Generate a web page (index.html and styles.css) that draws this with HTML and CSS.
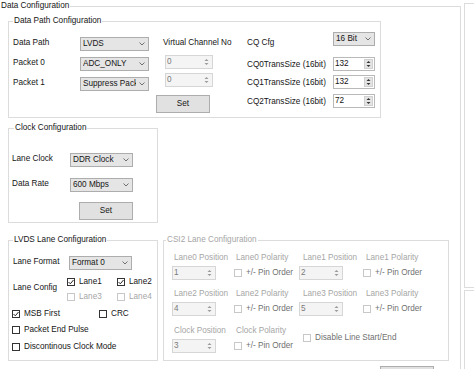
FILE: index.html
```html
<!DOCTYPE html>
<html>
<head>
<meta charset="utf-8">
<title>Data Configuration</title>
<link rel="stylesheet" href="styles.css">
</head>
<body>
<div class="page">
  <section class="group outer">
    <div class="title">Data Configuration</div>

    <section class="group datapath">
      <div class="title">Data Path Configuration</div>
      <div class="dp-body">
        <div class="dp-left">
          <div class="row"><span class="lbl w67">Data Path</span><div class="combo w69"><span class="val">LVDS</span><span class="arrow"><svg width="6" height="4" viewBox="0 0 6 4"><path d="M0.5 0.5 L3 3 L5.5 0.5" fill="none" stroke="#707070"/></svg></span></div></div>
          <div class="row"><span class="lbl w67">Packet 0</span><div class="combo w69"><span class="val">ADC_ONLY</span><span class="arrow"><svg width="6" height="4" viewBox="0 0 6 4"><path d="M0.5 0.5 L3 3 L5.5 0.5" fill="none" stroke="#707070"/></svg></span></div></div>
          <div class="row"><span class="lbl w67">Packet 1</span><div class="combo w69"><span class="val">Suppress Packet</span><span class="arrow"><svg width="6" height="4" viewBox="0 0 6 4"><path d="M0.5 0.5 L3 3 L5.5 0.5" fill="none" stroke="#707070"/></svg></span></div></div>
        </div>
        <div class="dp-vc">
          <span class="lbl">Virtual Channel No</span>
          <div class="spin off s1"><span class="val">0</span><span class="arrows"><svg width="5" height="8" viewBox="0 0 5 8"><path d="M0.5 3 L2.5 1 L4.5 3 Z M0.5 5 L4.5 5 L2.5 7 Z" fill="#9a9a9a"/></svg></span></div>
          <div class="spin off s2"><span class="val">0</span><span class="arrows"><svg width="5" height="8" viewBox="0 0 5 8"><path d="M0.5 3 L2.5 1 L4.5 3 Z M0.5 5 L4.5 5 L2.5 7 Z" fill="#9a9a9a"/></svg></span></div>
          <button class="btn">Set</button>
        </div>
        <div class="dp-cq">
          <div class="row r1"><span class="lbl w86">CQ Cfg</span><div class="combo w42"><span class="val">16 Bit</span><span class="arrow"><svg width="6" height="4" viewBox="0 0 6 4"><path d="M0.5 0.5 L3 3 L5.5 0.5" fill="none" stroke="#707070"/></svg></span></div></div>
          <div class="row r2"><span class="lbl w86">CQ0TransSize (16bit)</span><div class="spin w42"><span class="val">132</span><span class="arrows"><svg width="5" height="8" viewBox="0 0 5 8"><path d="M0.5 3 L2.5 1 L4.5 3 Z M0.5 5 L4.5 5 L2.5 7 Z" fill="#333"/></svg></span></div></div>
          <div class="row r3"><span class="lbl w86">CQ1TransSize (16bit)</span><div class="spin w42"><span class="val">132</span><span class="arrows"><svg width="5" height="8" viewBox="0 0 5 8"><path d="M0.5 3 L2.5 1 L4.5 3 Z M0.5 5 L4.5 5 L2.5 7 Z" fill="#333"/></svg></span></div></div>
          <div class="row r4"><span class="lbl w86">CQ2TransSize (16bit)</span><div class="spin w42"><span class="val">72</span><span class="arrows"><svg width="5" height="8" viewBox="0 0 5 8"><path d="M0.5 3 L2.5 1 L4.5 3 Z M0.5 5 L4.5 5 L2.5 7 Z" fill="#333"/></svg></span></div></div>
        </div>
      </div>
    </section>

    <section class="group clock">
      <div class="title">Clock Configuration</div>
      <div class="clock-body">
        <div class="row"><span class="lbl w58">Lane Clock</span><div class="combo w63"><span class="val">DDR Clock</span><span class="arrow"><svg width="6" height="4" viewBox="0 0 6 4"><path d="M0.5 0.5 L3 3 L5.5 0.5" fill="none" stroke="#707070"/></svg></span></div></div>
        <div class="row r2"><span class="lbl w58">Data Rate</span><div class="combo w63"><span class="val">600 Mbps</span><span class="arrow"><svg width="6" height="4" viewBox="0 0 6 4"><path d="M0.5 0.5 L3 3 L5.5 0.5" fill="none" stroke="#707070"/></svg></span></div></div>
        <button class="btn clock-set">Set</button>
      </div>
    </section>

    <div class="bottom">
      <section class="group lvds">
        <div class="title">LVDS Lane Configuration</div>
        <div class="lvds-body">
          <div class="row"><span class="lbl w56">Lane Format</span><div class="combo w63"><span class="val">Format 0</span><span class="arrow"><svg width="6" height="4" viewBox="0 0 6 4"><path d="M0.5 0.5 L3 3 L5.5 0.5" fill="none" stroke="#707070"/></svg></span></div></div>
          <div class="lanes">
            <span class="lbl lanes-lbl">Lane Config</span>
            <div class="lane-grid">
              <label class="chk"><span class="box"><svg width="6" height="6" viewBox="0 0 6 6"><path d="M0.5 3 L2.3 4.8 L5.5 1" fill="none" stroke="#222"/></svg></span><span class="txt">Lane1</span></label>
              <label class="chk"><span class="box"><svg width="6" height="6" viewBox="0 0 6 6"><path d="M0.5 3 L2.3 4.8 L5.5 1" fill="none" stroke="#222"/></svg></span><span class="txt">Lane2</span></label>
              <label class="chk dis"><span class="box"></span><span class="txt">Lane3</span></label>
              <label class="chk dis"><span class="box"></span><span class="txt">Lane4</span></label>
            </div>
          </div>
          <div class="row msb">
            <label class="chk w87"><span class="box"><svg width="6" height="6" viewBox="0 0 6 6"><path d="M0.5 3 L2.3 4.8 L5.5 1" fill="none" stroke="#222"/></svg></span><span class="txt">MSB First</span></label>
            <label class="chk"><span class="box"></span><span class="txt">CRC</span></label>
          </div>
          <label class="chk pep"><span class="box"></span><span class="txt">Packet End Pulse</span></label>
          <label class="chk dcm"><span class="box"></span><span class="txt">Discontinous Clock Mode</span></label>
        </div>
      </section>

      <section class="group csi">
        <div class="title">CSI2 Lane Configuration</div>
        <div class="csi-body">
          <div class="csi-row">
            <div class="pos"><span class="lbl">Lane0 Position</span><div class="spin off"><span class="val">1</span><span class="arrows"><svg width="5" height="8" viewBox="0 0 5 8"><path d="M0.5 3 L2.5 1 L4.5 3 Z M0.5 5 L4.5 5 L2.5 7 Z" fill="#9a9a9a"/></svg></span></div></div>
            <div class="pol"><span class="lbl">Lane0 Polarity</span><label class="chk dis2"><span class="box"></span><span class="txt">+/- Pin Order</span></label></div>
            <div class="pos p3"><span class="lbl">Lane1 Position</span><div class="spin off"><span class="val">2</span><span class="arrows"><svg width="5" height="8" viewBox="0 0 5 8"><path d="M0.5 3 L2.5 1 L4.5 3 Z M0.5 5 L4.5 5 L2.5 7 Z" fill="#9a9a9a"/></svg></span></div></div>
            <div class="pol p4"><span class="lbl">Lane1 Polarity</span><label class="chk dis2"><span class="box"></span><span class="txt">+/- Pin Order</span></label></div>
          </div>
          <div class="csi-row r2">
            <div class="pos"><span class="lbl">Lane2 Position</span><div class="spin off"><span class="val">4</span><span class="arrows"><svg width="5" height="8" viewBox="0 0 5 8"><path d="M0.5 3 L2.5 1 L4.5 3 Z M0.5 5 L4.5 5 L2.5 7 Z" fill="#9a9a9a"/></svg></span></div></div>
            <div class="pol"><span class="lbl">Lane2 Polarity</span><label class="chk dis2"><span class="box"></span><span class="txt">+/- Pin Order</span></label></div>
            <div class="pos p3"><span class="lbl">Lane3 Position</span><div class="spin off"><span class="val">5</span><span class="arrows"><svg width="5" height="8" viewBox="0 0 5 8"><path d="M0.5 3 L2.5 1 L4.5 3 Z M0.5 5 L4.5 5 L2.5 7 Z" fill="#9a9a9a"/></svg></span></div></div>
            <div class="pol p4"><span class="lbl">Lane3 Polarity</span><label class="chk dis2"><span class="box"></span><span class="txt">+/- Pin Order</span></label></div>
          </div>
          <div class="csi-row r3">
            <div class="pos"><span class="lbl">Clock Position</span><div class="spin off"><span class="val">3</span><span class="arrows"><svg width="5" height="8" viewBox="0 0 5 8"><path d="M0.5 3 L2.5 1 L4.5 3 Z M0.5 5 L4.5 5 L2.5 7 Z" fill="#9a9a9a"/></svg></span></div></div>
            <div class="pol"><span class="lbl">Clock Polarity</span><label class="chk dis2"><span class="box"></span><span class="txt">+/- Pin Order</span></label></div>
            <div class="span2"><label class="chk dis2"><span class="box"></span><span class="txt">Disable Line Start/End</span></label></div>
          </div>
        </div>
      </section>
    </div>

    <button class="btn next"></button>
  </section>

  <div class="side">
    <div class="group side1"></div>
    <div class="group side2"></div>
  </div>
</div>
</body>
</html>
```

FILE: styles.css
```css
* { box-sizing: border-box; }
html, body { margin: 0; padding: 0; }
body {
  width: 474px;
  height: 369px;
  overflow: hidden;
  background: #fff;
  font-family: "Liberation Sans", Arial, sans-serif;
  font-size: 8.2px;
  line-height: 10px;
  color: #151515;
}
.page {
  display: flex;
  align-items: flex-start;
  width: 474px;
  height: 369px;
  overflow: hidden;
}
.group { border: 1px solid #dcdcdc; flex: none; }
.title {
  display: block;
  width: max-content;
  height: 10px;
  margin: -6px 0 -4px 4px;
  padding: 0 1px;
  background: #fff;
  white-space: nowrap;
  position: relative;
}
.outer { margin: 6px 0 0 -7px; width: 468px; height: 420px; }
.outer > .title { margin-left: 6px; }

.row { display: flex; align-items: flex-start; }
.lbl { display: block; white-space: nowrap; padding-top: 1px; flex: none; }
.w56 { width: 56px; }
.w58 { width: 58px; }
.w67 { width: 67px; }
.w86 { width: 86px; }
.w42 { width: 42px; }
.w63 { width: 63px; }
.w69 { width: 69px; }
.w87 { width: 87px; }

/* combo box */
.combo {
  display: flex;
  align-items: center;
  height: 14px;
  flex: none;
  background: #e5e5e5;
  border: 1px solid #adadad;
  padding-left: 2px;
}
.combo .val { flex: 1; min-width: 0; overflow: hidden; white-space: nowrap; line-height: 12px; }
.combo .arrow { width: 12px; height: 12px; display: flex; align-items: center; justify-content: center; flex: none; }

/* spinner */
.spin {
  display: flex;
  height: 14px;
  flex: none;
  background: #fff;
  border: 1px solid #b9b9b9;
}
.spin .val { flex: 1; padding-left: 1px; line-height: 12px; white-space: nowrap; }
.spin .arrows {
  width: 9px;
  margin: 1px;
  background: #e4e4e4;
  border: 1px solid #d0d0d0;
  display: flex;
  align-items: center;
  justify-content: center;
  flex: none;
}
.spin.off { background: #f4f4f4; border-color: #d6d6d6; color: #7a7a7a; }
.spin.off .arrows { background: transparent; border-color: transparent; }

/* button */
.btn {
  display: block;
  width: 54px;
  height: 18px;
  padding: 0;
  margin: 0;
  background: #e1e1e1;
  border: 1px solid #adadad;
  font: inherit;
  color: #151515;
  line-height: 16px;
  text-align: center;
}

/* checkbox */
.chk { display: flex; align-items: center; height: 10px; white-space: nowrap; flex: none; }
.chk .box {
  width: 8px;
  height: 8px;
  border: 1px solid #333;
  background: #fff;
  margin-right: 4px;
  display: flex;
  align-items: center;
  justify-content: center;
  flex: none;
}
.chk.dis .box { border-color: #c8c8c8; }
.chk.dis .txt { color: #a6a6a6; }
.chk.dis2 .box { border-color: #c8c8c8; }
.chk.dis2 .txt { color: #707070; }

/* data path */
.datapath { margin: 14px 0 0 14px; width: 373px; height: 97px; }
.dp-body { display: flex; }
.dp-left { width: 147px; flex: none; padding: 15px 0 0 4px; display: flex; flex-direction: column; gap: 6px; }
.dp-vc { width: 91px; flex: none; display: flex; flex-direction: column; align-items: flex-start; }
.dp-vc .lbl { margin: 16px 0 0 7px; padding-top: 0; }
.dp-vc .spin { margin-left: 9px; width: 48px; }
.dp-vc .s1 { margin-top: 7px; }
.dp-vc .s2 { margin-top: 4px; }
.dp-vc .btn { margin-top: 8px; }
.dp-cq { display: flex; flex-direction: column; }
.dp-cq .r1 { margin-top: 10px; }
.dp-cq .r1 .lbl { padding-top: 6px; }
.dp-cq .r2 { margin-top: 9px; }
.dp-cq .r3 { margin-top: 4px; }
.dp-cq .r4 { margin-top: 5px; }
.dp-cq .r2 .lbl, .dp-cq .r3 .lbl, .dp-cq .r4 .lbl { padding-top: 3px; }

/* clock */
.clock { margin: 10px 0 0 14px; width: 150px; height: 95px; }
.clock > .title { margin-left: 5px; }
.clock-body { padding: 24px 0 0 3px; }
.clock-body .r2 { margin-top: 11px; }
.clock-set { margin: 10px 0 0 67px; }

/* bottom */
.bottom { display: flex; align-items: flex-start; margin-top: 17px; }
.lvds { margin-left: 14px; width: 150px; height: 121px; }
.lvds-body { padding: 15px 0 0 4px; }
.lanes { display: flex; margin-top: 7px; }
.lanes-lbl { width: 54px; padding-top: 6px; }
.lane-grid { display: grid; grid-template-columns: 50px auto; row-gap: 5px; }
.msb { margin: 7px 0 0 -1px; }
.pep { margin: 6px 0 0 -1px; }
.dcm { margin: 7px 0 0 -1px; }

.csi { margin-left: 5px; width: 286px; height: 121px; color: #a6a6a6; }
.csi > .title { margin-left: 2px; }
.csi-body { padding: 12px 0 0 8px; }
.csi-row { display: grid; grid-template-columns: 62px 65px 64px 1fr; align-items: start; }
.csi-row.r2 { margin-top: 9px; }
.csi-row.r3 { margin-top: 10px; }
.pos .lbl, .pol .lbl { padding: 0 0 0 2px; }
.pos.p3 .lbl { padding-left: 4px; }
.pol.p4 .lbl { padding-left: 3px; }
.pos .spin { width: 44px; margin-top: 3px; }
.pol .chk { margin-top: 5px; }
.span2 { grid-column: 3 / span 2; padding: 7px 0 0 4px; }

.next { margin: 5px 0 0 386px; }

.side { margin-left: 3px; width: 20px; flex: none; }
.side1 { margin-top: 3px; height: 285px; width: 20px; }
.side2 { margin-top: 2px; height: 100px; width: 20px; }
```
